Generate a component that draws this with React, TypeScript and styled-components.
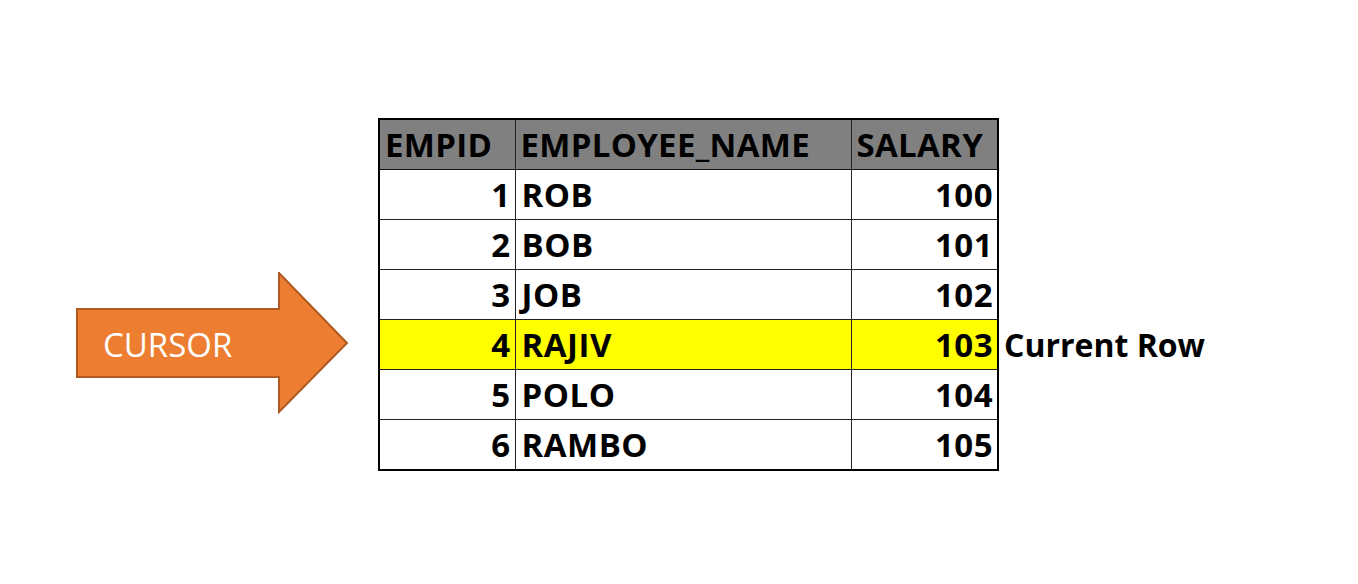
import styled, { createGlobalStyle } from "styled-components";

const GlobalStyle = createGlobalStyle`
  html, body {
    margin: 0;
    padding: 0;
    background: #ffffff;
  }
  body {
    font-family: "Open Sans", "Liberation Sans", sans-serif;
  }
`;

const rows = [
  { id: 1, name: "ROB", salary: 100 },
  { id: 2, name: "BOB", salary: 101 },
  { id: 3, name: "JOB", salary: 102 },
  { id: 4, name: "RAJIV", salary: 103, current: true },
  { id: 5, name: "POLO", salary: 104 },
  { id: 6, name: "RAMBO", salary: 105 },
];

export default function App() {
  return (
    <>
      <GlobalStyle />
      <Stage>
        <Arrow>
          <svg width="274" height="142" viewBox="0 0 274 142">
            <path
              d="M1 37 H203 V1 L271 71 L203 140 V105 H1 Z"
              fill="#ED7D31"
              stroke="#AE5A21"
              strokeWidth="2"
            />
          </svg>
          <ArrowLabel>CURSOR</ArrowLabel>
        </Arrow>

        <Table>
          <colgroup>
            <col style={{ width: 136 }} />
            <col style={{ width: 336 }} />
            <col style={{ width: 147 }} />
          </colgroup>
          <thead>
            <tr>
              <Th>EMPID</Th>
              <Th>EMPLOYEE_NAME</Th>
              <Th>SALARY</Th>
            </tr>
          </thead>
          <tbody>
            {rows.map((r) => (
              <Row key={r.id} $current={!!r.current}>
                <Td $align="right">{r.id}</Td>
                <Td>{r.name}</Td>
                <Td $align="right">{r.salary}</Td>
              </Row>
            ))}
          </tbody>
        </Table>

        <Note>Current Row</Note>
      </Stage>
    </>
  );
}

const Stage = styled.div`
  display: flex;
  align-items: flex-start;
  width: 1358px;
  height: 584px;
  padding: 118px 0 0 76px;
  box-sizing: border-box;
`;

const Arrow = styled.div`
  position: relative;
  margin-top: 154px;
  margin-right: 28px;
  width: 274px;
  height: 142px;

  svg {
    display: block;
  }
`;

const ArrowLabel = styled.span`
  position: absolute;
  left: 27px;
  top: 53px;
  color: #ffffff;
  font-size: 33px;
  line-height: 40px;
  font-weight: 400;
`;

const Table = styled.table`
  border-collapse: collapse;
  border: 2px solid #000000;
  table-layout: fixed;
  width: 619px;
`;

const Th = styled.th`
  height: 49px;
  padding: 0 4px 0 5px;
  background: #808080;
  border: 1px solid #222222;
  border-bottom: 1px solid #111111;
  text-align: left;
  font-size: 33px;
  font-weight: 700;
  letter-spacing: 0.3px;
  color: #000000;
  white-space: nowrap;
`;

const Row = styled.tr<{ $current: boolean }>`
  background: ${({ $current }) => ($current ? "#FFFF00" : "#ffffff")};
`;

const Td = styled.td<{ $align?: "left" | "right" }>`
  height: 49px;
  padding: 0 4px 0 6px;
  border: 1px solid #222222;
  text-align: ${({ $align }) => $align ?? "left"};
  font-size: 33px;
  font-weight: 700;
  letter-spacing: 0.5px;
  color: #000000;
  white-space: nowrap;
`;

const Note = styled.div`
  margin: 201px 0 0 5px;
  height: 50px;
  line-height: 52px;
  font-size: 32px;
  font-weight: 700;
  color: #000000;
  white-space: nowrap;
`;
